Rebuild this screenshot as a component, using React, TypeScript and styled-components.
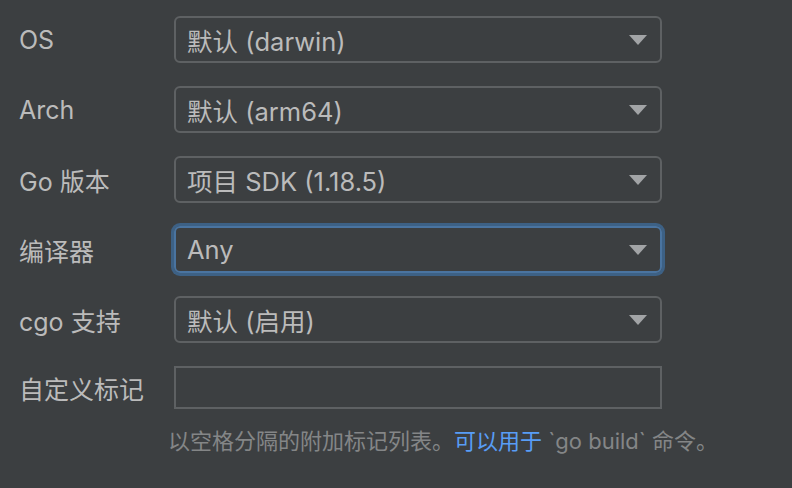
import { Fragment } from "react";
import styled, { createGlobalStyle } from "styled-components";

const GlobalStyle = createGlobalStyle`
  body {
    margin: 0;
    background-color: #3c3f41;
    font-family: "Inter", "Noto Sans CJK SC", sans-serif;
  }
`;

const FormRoot = styled.div`
  display: grid;
  grid-template-columns: 155px 488px;
  row-gap: 23px;
  align-items: center;
  align-content: start;
  padding: 16px 0 0 19px;
  min-height: 488px;
  box-sizing: border-box;
  background-color: #3c3f41;
`;

const Label = styled.div`
  font-size: 25px;
  color: #bbbbbb;
  white-space: nowrap;
`;

const Combo = styled.div<{ $focused?: boolean }>`
  display: flex;
  align-items: center;
  justify-content: space-between;
  box-sizing: border-box;
  height: 47px;
  padding: 0 13px 0 11px;
  border: 2px solid ${(p) => (p.$focused ? "#4a74a0" : "#5e6163")};
  border-radius: 6px;
  box-shadow: ${(p) => (p.$focused ? "0 0 0 3px #3d6185" : "none")};
  font-size: 25.5px;
  color: #bbbbbb;
`;

const Arrow = styled.div`
  width: 0;
  height: 0;
  border-left: 9px solid transparent;
  border-right: 9px solid transparent;
  border-top: 10px solid #a2a4a6;
`;

const TextField = styled.div`
  box-sizing: border-box;
  height: 43px;
  border: 2px solid #5e6163;
`;

const Hint = styled.div`
  grid-column: 2;
  margin: -9px 0 0 -6px;
  font-size: 22px;
  color: #848687;
  white-space: nowrap;
`;

const Link = styled.span`
  color: #589df6;
`;

const rows = [
  { label: "OS", value: "默认 (darwin)" },
  { label: "Arch", value: "默认 (arm64)" },
  { label: "Go 版本", value: "项目 SDK (1.18.5)" },
  { label: "编译器", value: "Any", focused: true },
  { label: "cgo 支持", value: "默认 (启用)" },
];

function App() {
  return (
    <>
      <GlobalStyle />
      <FormRoot>
        {rows.map((row) => (
          <Fragment key={row.label}>
            <Label>{row.label}</Label>
            <Combo $focused={row.focused}>
              <span>{row.value}</span>
              <Arrow />
            </Combo>
          </Fragment>
        ))}
        <Label>自定义标记</Label>
        <TextField />
        <Hint>
          以空格分隔的附加标记列表。<Link>可以用于</Link> `go build` 命令。
        </Hint>
      </FormRoot>
    </>
  );
}

export default App;
